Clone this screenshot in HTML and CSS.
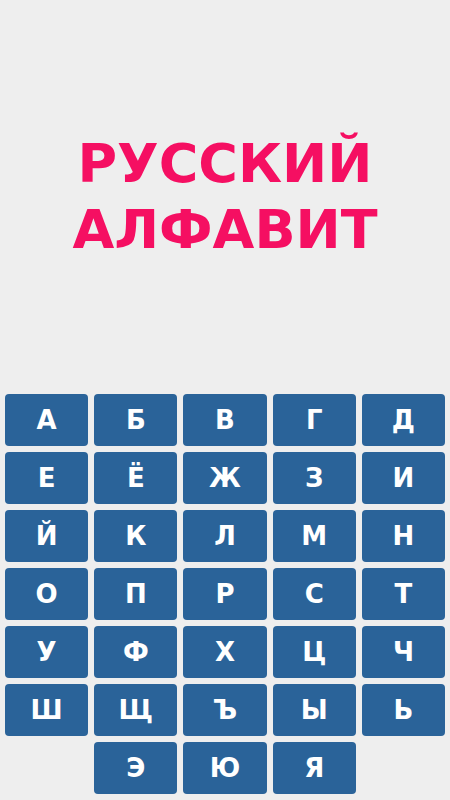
FILE: index.html
```html
<!DOCTYPE html>
<html lang="ru">
<head>
<meta charset="utf-8">
<title>Русский алфавит</title>
<link rel="stylesheet" href="styles.css">
</head>
<body>
<div class="app">
  <header class="hero">
    <h1 class="title">РУССКИЙ<br>АЛФАВИТ</h1>
  </header>
  <main class="keys">
    <div class="key">А</div><div class="key">Б</div><div class="key">В</div><div class="key">Г</div><div class="key">Д</div>
    <div class="key">Е</div><div class="key">Ё</div><div class="key">Ж</div><div class="key">З</div><div class="key">И</div>
    <div class="key">Й</div><div class="key">К</div><div class="key">Л</div><div class="key">М</div><div class="key">Н</div>
    <div class="key">О</div><div class="key">П</div><div class="key">Р</div><div class="key">С</div><div class="key">Т</div>
    <div class="key">У</div><div class="key">Ф</div><div class="key">Х</div><div class="key">Ц</div><div class="key">Ч</div>
    <div class="key">Ш</div><div class="key">Щ</div><div class="key">Ъ</div><div class="key">Ы</div><div class="key">Ь</div>
    <div class="key key-start2">Э</div><div class="key">Ю</div><div class="key">Я</div>
  </main>
</div>
</body>
</html>
```
FILE: styles.css
```css
html, body {
  margin: 0;
  padding: 0;
  background: #eeeeee;
}
body {
  font-family: "DejaVu Sans", Verdana, sans-serif;
}
.app {
  height: 800px;
  display: flex;
  flex-direction: column;
}
.hero {
  flex: 1;
  display: flex;
  align-items: center;
  justify-content: center;
}
.title {
  margin: 0;
  color: #f50f62;
  font-weight: bold;
  font-size: 54px;
  line-height: 66px;
  text-align: center;
}
.keys {
  display: grid;
  grid-template-columns: repeat(5, 1fr);
  grid-auto-rows: 52px;
  gap: 6px;
  padding: 0 5px 6px 5px;
}
.key {
  background: #2a6399;
  color: #ffffff;
  border-radius: 4px;
  display: flex;
  align-items: center;
  justify-content: center;
  font-weight: bold;
  font-size: 26px;
}
.key-start2 {
  grid-column-start: 2;
}
```
